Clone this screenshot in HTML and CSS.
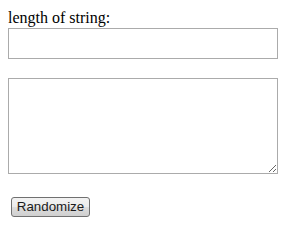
FILE: index.html
```html
<!DOCTYPE html>
<html lang="en">
<head>
  <meta charset="UTF-8" />
  <title>Randomize</title>
  <link rel="stylesheet" href="styles.css">
</head>
<body>
  <div class="form">
    <label class="rotulo" for="tamanho">length of string:</label>
    <input type="text" id="tamanho" class="campo" />
    <textarea id="saida" class="saida"></textarea>
    <button class="botao">Randomize</button>
  </div>
</body>
</html>
```

FILE: styles.css
```css
* {
  box-sizing: border-box;
}

body {
  margin: 8px;
  font-family: 'Liberation Serif', 'Times New Roman', serif;
  font-size: 16px;
  color: #000;
  background: #fff;
}

.form {
  display: flex;
  flex-direction: column;
  align-items: flex-start;
}

.rotulo {
  line-height: 20px;
}

.campo {
  width: 270px;
  height: 31px;
  border: 1px solid #ababab;
  margin: 0;
  padding: 2px 4px;
  outline: none;
}

.saida {
  width: 270px;
  height: 96px;
  margin-top: 19px;
  border: 1px solid #ababab;
  padding: 2px;
  outline: none;
}

.botao {
  margin-top: 23px;
  margin-left: 3px;
  width: 79px;
  height: 20px;
  padding: 0;
  font-family: 'Liberation Sans', Arial, sans-serif;
  font-size: 13.33px;
  line-height: 18px;
  color: #1a1a1a;
  border: 1px solid #707070;
  border-radius: 3px;
  background: linear-gradient(#f2f2f2 0%, #ebebeb 50%, #dddddd 51%, #cfcfcf 100%);
}
```
